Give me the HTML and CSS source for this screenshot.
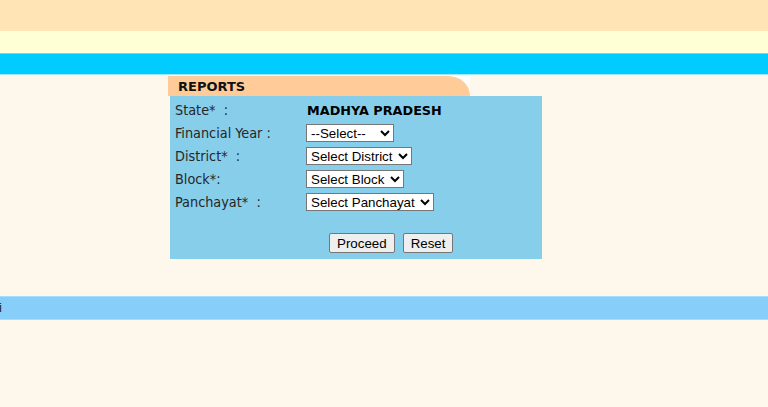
FILE: index.html
```html
<!DOCTYPE html>
<html>
<head>
<meta charset="utf-8">
<link rel="stylesheet" href="styles.css">
</head>
<body>
<div class="band band-top"></div>
<div class="band band-yellow"></div>
<div class="band band-cyan"></div>
<main class="content">
  <div class="box">
    <div class="tab-wrap"><div class="tab">REPORTS</div></div>
    <div class="panel">
      <div class="grid">
        <div class="lbl">State*&nbsp; :</div>
        <div class="val state">MADHYA PRADESH</div>
        <div class="lbl">Financial Year :</div>
        <div class="val"><select class="sel sel-fy"><option>--Select--</option></select></div>
        <div class="lbl">District*&nbsp; :</div>
        <div class="val"><select class="sel"><option>Select District</option></select></div>
        <div class="lbl">Block*:</div>
        <div class="val"><select class="sel"><option>Select Block</option></select></div>
        <div class="lbl">Panchayat*&nbsp; :</div>
        <div class="val"><select class="sel"><option>Select Panchayat</option></select></div>
      </div>
      <div class="actions">
        <button class="btn">Proceed</button>
        <button class="btn">Reset</button>
      </div>
    </div>
  </div>
</main>
<div class="footer-bar"><span class="ftxt">i</span></div>
</body>
</html>
```
FILE: styles.css
```css
html, body {
  margin: 0;
  padding: 0;
}
body {
  background: #fef8ec;
  font-family: "Liberation Sans", Arial, sans-serif;
  width: 768px;
  height: 407px;
  overflow: hidden;
}
.band-top {
  height: 31px;
  background: #ffe4b5;
}
.band-yellow {
  height: 22px;
  background: #ffffd6;
}
.band-cyan {
  background: #00ccff;
  border-top: 1px solid #5fdcff;
  border-bottom: 1px solid #9fe8ff;
  box-sizing: border-box;
  height: 22px;
}
.content {
  padding-top: 1px;
  padding-left: 168px;
  height: 220px;
}
.box {
  width: 374px;
}
.tab-wrap {
  width: 302px;
  height: 20px;
  background: #ffffff;
}
.tab {
  height: 20px;
  background: #ffcc99;
  border-top-right-radius: 24px 22px;
  font-family: "DejaVu Sans", Verdana, sans-serif;
  font-weight: bold;
  font-size: 13px;
  line-height: 22px;
  padding-left: 10px;
  color: #111;
  box-sizing: border-box;
}
.panel {
  margin-left: 2px;
  width: 372px;
  background: #87ceeb;
  padding-top: 2px;
  padding-bottom: 6px;
}
.grid {
  display: grid;
  grid-template-columns: 136px auto;
  grid-auto-rows: 23px;
}
.lbl {
  padding-left: 5px;
  font-family: "DejaVu Sans Condensed", "DejaVu Sans", sans-serif;
  font-stretch: condensed;
  font-size: 14.3px;
  color: #262626;
  display: flex;
  align-items: center;
  white-space: nowrap;
}
.val {
  display: flex;
  align-items: center;
}
.state {
  font-family: "DejaVu Sans", Verdana, sans-serif;
  font-weight: bold;
  font-size: 12.8px;
  color: #000;
  padding-left: 1px;
  padding-top: 1px;
}
.sel {
  font-family: "Liberation Sans", Arial, sans-serif;
  font-size: 13.33px;
  height: 18px;
  margin: 0;
  padding: 0 2px 0 0;
  background: #fff;
  color: #000;
  border: 1px solid #767676;
}
.sel-fy {
  width: 88px;
}
.actions {
  display: flex;
  gap: 8px;
  padding-left: 159px;
  margin-top: 20px;
}
.btn {
  font-family: "Liberation Sans", Arial, sans-serif;
  font-size: 13.33px;
  height: 20px;
  padding: 0 7px;
  margin: 0;
  background: #efefef;
  border: 1px solid #767676;
  border-radius: 2px;
  color: #000;
}
.footer-bar {
  height: 24px;
  background: #87cefa;
  border-top: 1px solid #a8dcfb;
  border-bottom: 1px solid #a8dcfb;
  box-sizing: border-box;
  font-size: 13px;
  line-height: 22px;
  color: #222;
}
.ftxt {
  margin-left: -1px;
}
```
